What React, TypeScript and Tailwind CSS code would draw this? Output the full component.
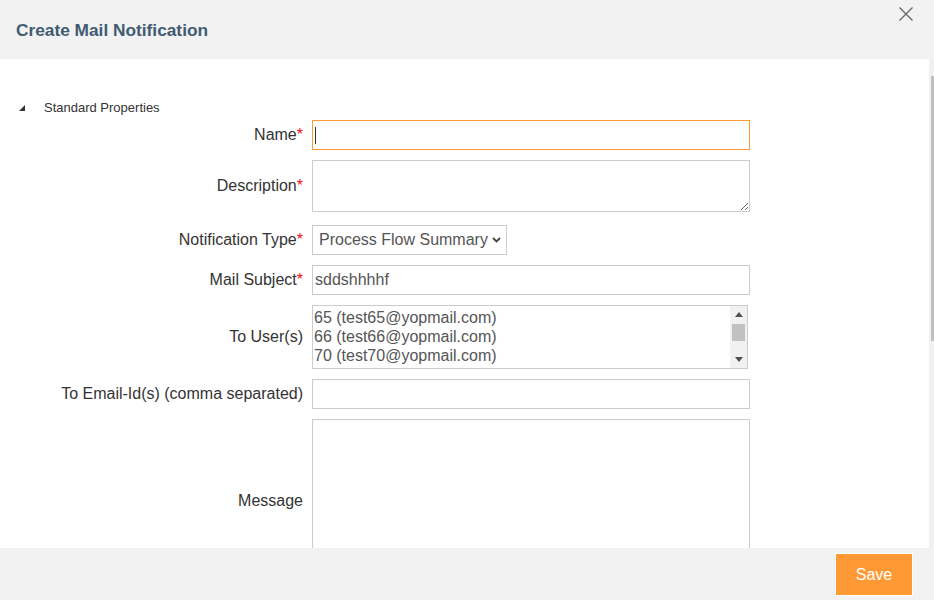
import { ReactNode } from "react";

const users = ["65 (test65@yopmail.com)", "66 (test66@yopmail.com)", "70 (test70@yopmail.com)"];

function Row({ label, required, className = "", children }: { label: string; required?: boolean; className?: string; children: ReactNode }) {
  return (
    <div className={`flex items-center ${className}`}>
      <label className="w-[303px] shrink-0 text-right text-[16px] text-[#333]">
        {label}
        {required && <span className="text-[#ee1111]">*</span>}
      </label>
      <div className="ml-[9px]">{children}</div>
    </div>
  );
}

export default function App() {
  return (
    <div className="w-[934px] h-[600px] flex flex-col overflow-hidden bg-white font-['Liberation_Sans',Arial,sans-serif]">
      {/* header */}
      <div className="h-[59px] shrink-0 bg-[#f2f2f2] flex justify-between pl-[16px] pr-[21px]">
        <h2 className="self-center mt-[2px] text-[17.3px] font-bold text-[#415b72]">Create Mail Notification</h2>
        <button className="mt-[7px] w-[14px] h-[14px] text-[#666]">
          <svg width="14" height="14" viewBox="0 0 14 14" fill="none" stroke="currentColor" strokeWidth="1.3">
            <path d="M0.5 0.5 L13.5 13.5 M13.5 0.5 L0.5 13.5" />
          </svg>
        </button>
      </div>

      {/* body */}
      <div className="flex-1 flex min-h-0">
        <div className="flex-1 overflow-hidden pt-[42px]">
          <div className="h-[14px] flex items-center pl-[19px]">
            <svg width="6" height="6" viewBox="0 0 6 6">
              <polygon points="6,0 6,6 0,6" fill="#333" />
            </svg>
            <span className="ml-[19px] text-[13px] text-[#333]">Standard Properties</span>
          </div>

          <div className="mt-[5px]">
            <Row label="Name" required>
              <div className="w-[438px] h-[30px] border border-[#ff9933] flex items-center pl-[2px]">
                <span className="w-px h-[17px] bg-[#333]" />
              </div>
            </Row>
            <Row label="Description" required className="mt-[10px]">
              <textarea className="block w-[438px] h-[52px] border border-[#ccc] outline-none" />
            </Row>
            <Row label="Notification Type" required className="mt-[13px]">
              <div className="w-[195px] h-[30px] border border-[#ccc] flex items-center justify-between pl-[6px] pr-[5px] text-[16px] text-[#555]">
                <span>Process Flow Summary</span>
                <svg width="9" height="6" viewBox="0 0 9 6" fill="none" stroke="#444" strokeWidth="1.8">
                  <path d="M1 1 L4.5 4.5 L8 1" />
                </svg>
              </div>
            </Row>
            <Row label="Mail Subject" required className="mt-[10px]">
              <input
                readOnly
                value="sddshhhhf"
                className="block w-[438px] h-[30px] border border-[#ccc] pl-[2px] text-[16px] text-[#555] outline-none"
              />
            </Row>
            <Row label="To User(s)" className="mt-[10px]">
              <div className="w-[436px] h-[64px] border border-[#ccc] flex">
                <div className="flex-1 pl-px pt-[2px] text-[16px] leading-[19px] text-[#555]">
                  {users.map((u) => (
                    <div key={u}>{u}</div>
                  ))}
                </div>
                <div className="w-[17px] h-full bg-[#f1f1f1] flex flex-col items-center">
                  <div className="h-[17px] flex items-center">
                    <svg width="8" height="5" viewBox="0 0 8 5">
                      <polygon points="4,0 8,5 0,5" fill="#505050" />
                    </svg>
                  </div>
                  <div className="w-[13px] h-[17px] mt-px bg-[#c1c1c1]" />
                  <div className="flex-1" />
                  <div className="h-[17px] flex items-center">
                    <svg width="8" height="5" viewBox="0 0 8 5">
                      <polygon points="0,0 8,0 4,5" fill="#505050" />
                    </svg>
                  </div>
                </div>
              </div>
            </Row>
            <Row label="To Email-Id(s) (comma separated)" className="mt-[10px]">
              <input readOnly className="block w-[438px] h-[30px] border border-[#ccc] outline-none" />
            </Row>
            <Row label="Message" className="mt-[10px]">
              <textarea className="block w-[438px] h-[164px] border border-[#ccc] outline-none" />
            </Row>
          </div>
        </div>
        <div className="w-[5px] shrink-0 bg-[#f1f1f1]">
          <div className="ml-[2px] mt-[17px] w-[3px] h-[265px] bg-[#c1c1c1]" />
        </div>
      </div>

      {/* footer */}
      <div className="h-[52px] shrink-0 bg-[#f2f2f2] flex justify-end pt-[5px] pr-[21px]">
        <button className="w-[78px] h-[43px] border border-white bg-[#ff9933] text-[16px] text-white">Save</button>
      </div>
    </div>
  );
}
